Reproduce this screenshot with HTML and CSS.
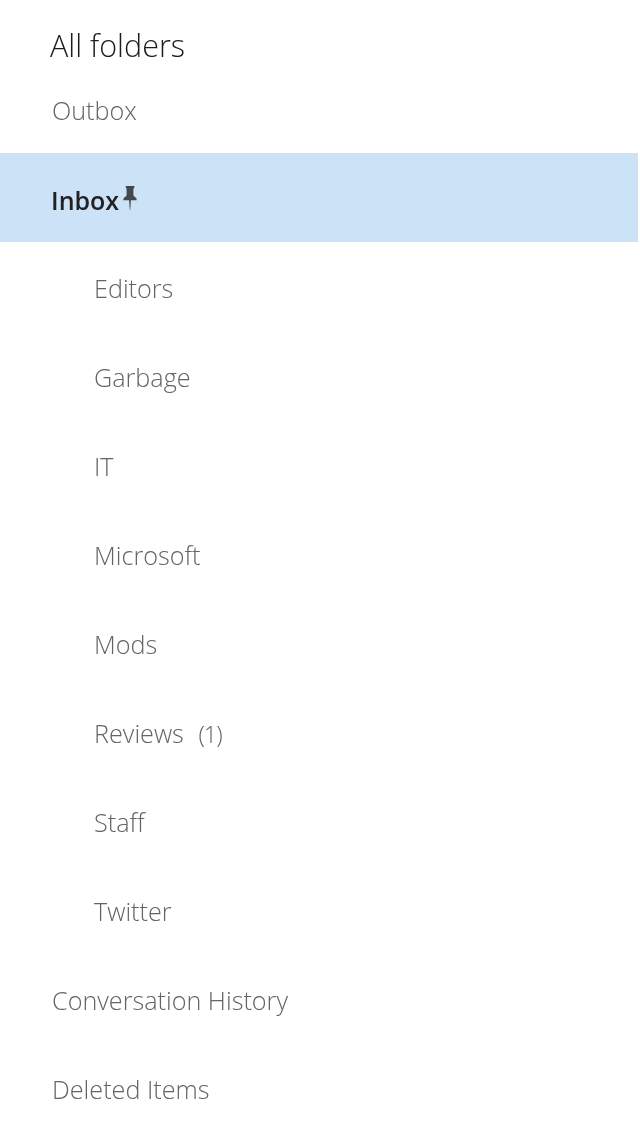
FILE: index.html
```html
<!DOCTYPE html>
<html lang="en">
<head>
    <meta charset="UTF-8">
    <meta name="viewport" content="width=device-width, initial-scale=1.0">
    <title>All folders</title>
    <link rel="stylesheet" href="styles.css">
</head>
<body>
<div class="panel">
    <h1 class="panel-title">All folders</h1>
    <ul class="folder-list">
        <li class="folder folder-outbox">Outbox</li>
        <li class="folder selected">
            <span>Inbox</span>
            <svg class="pin" viewBox="0 0 14 24" width="14" height="24">
                <path d="M2.8 0h8.6v1.6L10.4 3v6.4L13.6 12.6v1.6H7.9L7.2 24h-.4L6.1 14.2H.4v-1.6L3.6 9.4V3L2.8 1.6z" fill="#45484b"/>
            </svg>
        </li>
        <li class="folder child">Editors</li>
        <li class="folder child">Garbage</li>
        <li class="folder child">IT</li>
        <li class="folder child">Microsoft</li>
        <li class="folder child">Mods</li>
        <li class="folder child">Reviews <span class="count">(1)</span></li>
        <li class="folder child">Staff</li>
        <li class="folder child">Twitter</li>
        <li class="folder">Conversation History</li>
        <li class="folder">Deleted Items</li>
    </ul>
</div>
</body>
</html>
```

FILE: styles.css
```css
html, body {
    margin: 0;
    padding: 0;
    height: 100%;
    background-color: #fff;
}

body {
    font-family: "Open Sans", "Noto Sans", sans-serif;
    font-weight: 300;
    overflow: hidden;
}

.panel {
    will-change: transform;
}

.panel-title {
    margin: 0;
    padding: 25px 0 0 50px;
    height: 40px;
    font-size: 30.5px;
    line-height: 40px;
    font-weight: 300;
    color: #1c1c1c;
}

.folder-list {
    list-style: none;
    margin: 0;
    padding: 0;
    width: 638px;
}

.folder {
    display: flex;
    align-items: center;
    box-sizing: border-box;
    height: 89px;
    padding: 2px 0 0 52px;
    font-size: 25.2px;
    color: #646464;
    white-space: pre;
}

.folder-outbox {
    height: 88px;
}

.selected {
    background-color: #cce3f7;
    padding-left: 51px;
    padding-top: 4px;
    font-size: 25px;
    color: #222;
    font-weight: 600;
}

.pin {
    margin: -4px 0 0 4px;
}

.child {
    padding-left: 94px;
}

.count {
    margin: 3px 0 0 8px;
    font-size: 23.5px;
    letter-spacing: -1px;
}
```
